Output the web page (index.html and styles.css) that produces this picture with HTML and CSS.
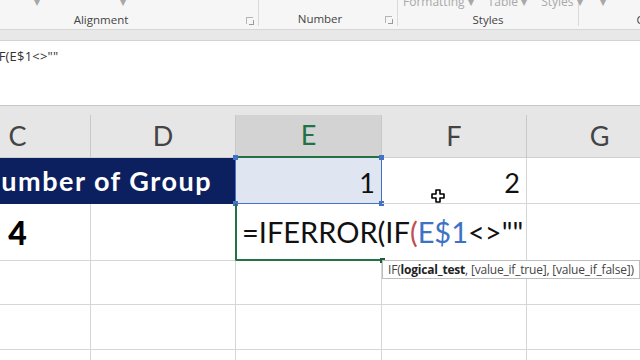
FILE: index.html
```html
<!DOCTYPE html>
<html lang="en">
<head>
    <meta charset="UTF-8">
    <meta name="viewport" content="width=device-width, initial-scale=1.0">
    <title>IFERROR formula</title>
    <link rel="stylesheet" href="styles.css">
</head>
<body>
    <!-- Ribbon (only the bottom edge is visible) -->
    <div class="ribbon">
        <div class="group group-align">
            <div class="group-top">
                <span class="muted">▾</span>
                <span class="muted">▾</span>
            </div>
            <div class="group-foot">
                <span class="label">Alignment</span>
                <span class="launcher"></span>
            </div>
        </div>
        <div class="group group-number">
            <div class="group-top"></div>
            <div class="group-foot">
                <span class="label">Number</span>
                <span class="launcher"></span>
            </div>
        </div>
        <div class="group group-styles">
            <div class="group-top">
                <span class="muted">Formatting ▾</span>
                <span class="muted">Table ▾</span>
                <span class="muted">Styles ▾</span>
            </div>
            <div class="group-foot">
                <span class="label">Styles</span>
            </div>
        </div>
        <div class="group group-cells">
            <div class="group-top">
                <span class="muted">▾</span>
            </div>
            <div class="group-foot">
                <span class="label">Cells</span>
            </div>
        </div>
    </div>
    <div class="band"></div>

    <div class="formula-bar">
        <span class="formula">=IFERROR(IF(E$1&lt;&gt;""</span>
    </div>

    <div class="sheet">
        <div class="head-strip"></div>
        <div class="grid">
            <div class="col-head">C</div>
            <div class="col-head">D</div>
            <div class="col-head active">E</div>
            <div class="col-head">F</div>
            <div class="col-head">G</div>

            <div class="cell title">Number of Group</div>
            <div class="cell ref">
                1
                <span class="knob tl"></span>
                <span class="knob tr"></span>
                <span class="knob bl"></span>
                <span class="knob br"></span>
            </div>
            <div class="cell num">
                2
                <svg class="pointer" width="14" height="14" viewBox="0 0 14 14">
                    <path d="M5 1h4v4h4v4h-4v4h-4v-4h-4v-4h4z" fill="#fff" stroke="#000" stroke-width="1.6" stroke-linejoin="round"/>
                </svg>
            </div>
            <div class="cell"></div>

            <div class="cell count">4</div>
            <div class="cell edge"></div>
            <div class="cell editing">
                <span class="entry">=IFERROR(IF<span class="paren">(</span><span class="refword">E$1</span>&lt;&gt;""</span><span class="caret"></span>
                <span class="handle"></span>
                <div class="tip">IF(<b>logical_test</b>, [value_if_true], [value_if_false])</div>
            </div>
            <div class="cell"></div>
            <div class="cell"></div>

            <div class="cell"></div>
            <div class="cell"></div>
            <div class="cell"></div>
            <div class="cell"></div>
            <div class="cell"></div>

            <div class="cell"></div>
            <div class="cell"></div>
            <div class="cell"></div>
            <div class="cell"></div>
            <div class="cell"></div>

            <div class="cell"></div>
            <div class="cell"></div>
            <div class="cell"></div>
            <div class="cell"></div>
            <div class="cell"></div>
        </div>
    </div>
</body>
</html>
```

FILE: styles.css
```css
* {
    margin: 0;
    padding: 0;
    box-sizing: border-box;
}

body {
    width: 640px;
    height: 360px;
    overflow: hidden;
    background: #fff;
    font-family: "Open Sans", "Noto Sans", sans-serif;
}

/* Ribbon */
.ribbon {
    display: flex;
    height: 30px;
    margin-left: -40px;
    background: #f6f6f6;
    border-bottom: 1px solid #d6d6d6;
    overflow: hidden;
}

.group {
    display: flex;
    flex-direction: column;
    flex-shrink: 0;
    border-right: 1px solid #dadada;
    height: 26px;
}

.group-align { width: 299px; }
.group-number { width: 139px; }
.group-styles { width: 181px; }
.group-cells { width: 140px; border-right: none; }

.group-top {
    display: flex;
    height: 12px;
    margin-top: -5px;
    font-size: 12px;
    line-height: 14px;
    white-space: nowrap;
}

.group-align .group-top { padding-left: 74px; gap: 80px; }
.group-styles .group-top { padding-left: 5px; gap: 14px; }
.group-cells .group-top { padding-left: 21px; }

.muted {
    color: #a8a8a8;
}

.group-foot {
    position: relative;
    display: flex;
    justify-content: center;
    padding-right: 16px;
    margin-top: 6px;
}

.group-styles .group-foot,
.group-cells .group-foot {
    padding-right: 0;
}

.label {
    font-size: 11.5px;
    line-height: 14px;
    color: #444;
}

.launcher {
    position: absolute;
    right: 5px;
    top: 4px;
    width: 7px;
    height: 7px;
    border-top: 1px solid #b5b5b5;
    border-left: 1px solid #b5b5b5;
}

.launcher::after {
    content: "";
    position: absolute;
    right: -1px;
    bottom: -1px;
    width: 4px;
    height: 4px;
    border-right: 1px solid #9a9a9a;
    border-bottom: 1px solid #9a9a9a;
}

.band {
    height: 11px;
    background: #e8e8e8;
    border-bottom: 1px solid #d3d3d3;
}

/* Formula bar */
.formula-bar {
    height: 65px;
    background: #fff;
    border-bottom: 1px solid #c6c6c6;
    padding-top: 3px;
    margin-left: -70px;
    white-space: nowrap;
}

.formula {
    font-size: 13px;
    color: #333;
    letter-spacing: 0.2px;
}

/* Sheet */
.head-strip {
    height: 9px;
    background: #e6e6e6;
}

.grid {
    display: grid;
    grid-template-columns: 146px 145px 146px 145px 146px;
    grid-template-rows: 43px 46px 57px 44px 45px 45px;
    margin-left: -55px;
    font-family: Lato, "Liberation Sans", sans-serif;
}

.col-head {
    display: flex;
    align-items: center;
    justify-content: center;
    background: #e6e6e6;
    border-right: 1px solid #c8c8c8;
    border-bottom: 1px solid #cfcfcf;
    font-size: 27px;
    color: #444;
    padding-bottom: 2px;
}

.col-head.active {
    background: #d3d3d3;
    color: #217346;
    border-bottom: 2px solid #217346;
}

.cell {
    position: relative;
    display: flex;
    align-items: center;
    border-right: 1px solid #d6d6d6;
    border-bottom: 1px solid #d6d6d6;
    font-size: 27px;
    color: #111;
    white-space: nowrap;
}

.title {
    grid-column: span 2;
    justify-content: flex-end;
    padding-right: 23px;
    background: #0c2060;
    border-right: 1px solid #4472c4;
    border-bottom-color: #0c2060;
    color: #fff;
    font-weight: 700;
    font-size: 27px;
    letter-spacing: 1.5px;
}

.ref {
    justify-content: flex-end;
    padding: 4px 6px 0 0;
    background: #dfe6f1;
    border-right: 1px solid #4472c4;
    border-bottom: 1px solid #4472c4;
}

.knob {
    position: absolute;
    width: 5px;
    height: 5px;
    background: #4472c4;
}

.knob.tl { left: -3px; top: -3px; }
.knob.tr { right: -3px; top: -3px; }
.knob.bl { left: -3px; bottom: -3px; }
.knob.br { right: -3px; bottom: -3px; }

.num {
    justify-content: flex-end;
    padding: 4px 6px 0 0;
}

.pointer {
    position: absolute;
    left: 49px;
    top: 31px;
}

.count {
    justify-content: center;
    font-weight: 900;
    font-size: 32px;
    color: #000;
}

.edge {
    border-right-color: #217346;
}

.editing {
    border-right: none;
    border-bottom: 2px solid #217346;
    box-shadow: inset 1px 0 0 #217346;
    padding-left: 6px;
    z-index: 1;
}

.entry {
    font-size: 29px;
    color: #111;
}

.paren {
    color: #c0504d;
}

.refword {
    color: #3d72c5;
}

.caret {
    display: inline-block;
    width: 1px;
    height: 31px;
    margin-left: 3px;
    background: #000;
}

.handle {
    position: absolute;
    right: -3px;
    bottom: -4px;
    width: 5px;
    height: 5px;
    background: #1e5c3a;
}

.tip {
    position: absolute;
    left: 146px;
    top: 100%;
    margin-top: 1px;
    padding: 0 5px;
    height: 19px;
    background: #fff;
    border: 1px solid #bdbdbd;
    font-family: "Open Sans", sans-serif;
    font-size: 12px;
    line-height: 17px;
    color: #444;
    letter-spacing: -0.2px;
    white-space: nowrap;
}

.tip b {
    color: #222;
}
```
